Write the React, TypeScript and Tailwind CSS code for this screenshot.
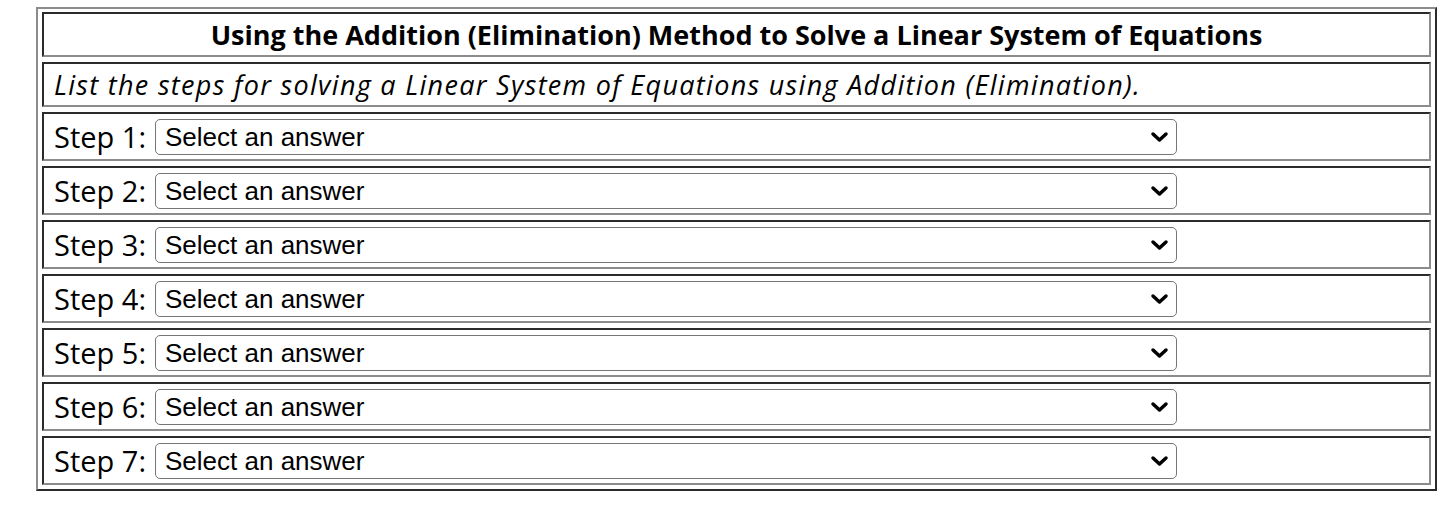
import React from 'react';

const steps = [1, 2, 3, 4, 5, 6, 7];

const cell = 'border-2 border-t-[#2b2b2b] border-l-[#2b2b2b] border-b-[#8c8c8c] border-r-[#8c8c8c] bg-white';

const App = () => {
  return (
    <div className="min-h-screen bg-white pt-[7px] pl-[36px] font-['Open_Sans',sans-serif] text-black">
      <div className="w-[1401px] border-2 border-t-[#8c8c8c] border-l-[#8c8c8c] border-b-[#2b2b2b] border-r-[#2b2b2b] pt-[3px] pb-[4px] px-[4px] flex flex-col gap-[5px]">
        {/* Title */}
        <div className={`${cell} h-[45px] flex items-center justify-center`}>
          <h1 className="text-[27px] font-bold leading-none">
            Using the Addition (Elimination) Method to Solve a Linear System of Equations
          </h1>
        </div>

        {/* Instructions */}
        <div className={`${cell} h-[45px] flex items-center pl-[10px]`}>
          <p className="text-[27px] italic leading-none tracking-[1.3px]">
            List the steps for solving a Linear System of Equations using Addition (Elimination).
          </p>
        </div>

        {/* Steps */}
        {steps.map((n) => (
          <div key={n} className={`${cell} h-[49px] flex items-center pl-[10px]`}>
            <span className="text-[29px] leading-none w-[101px] shrink-0">Step {n}:</span>
            <div className="relative w-[1022px] h-[36px]">
              <select
                defaultValue=""
                className="appearance-none w-full h-full rounded-[5px] border border-[#767676] bg-white pl-[9px] pr-[40px] font-['Liberation_Sans',Arial,sans-serif] text-[26px] leading-none text-black outline-none"
              >
                <option value="">Select an answer</option>
              </select>
              <svg
                className="absolute right-[8px] top-1/2 -translate-y-1/2 pointer-events-none"
                width="19"
                height="12"
                viewBox="0 0 19 12"
              >
                <path d="M3 3 L9.5 9 L16 3" fill="none" stroke="#000" strokeWidth="3.5" strokeLinecap="round" strokeLinejoin="round" />
              </svg>
            </div>
          </div>
        ))}
      </div>
    </div>
  );
};

export default App;
